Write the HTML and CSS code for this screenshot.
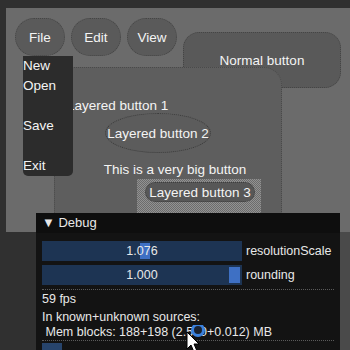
FILE: index.html
```html
<!DOCTYPE html>
<html lang="en">
<head>
  <meta charset="UTF-8">
  <title>Layered buttons</title>
  <link rel="stylesheet" href="styles.css">
</head>
<body>

  <div class="panel">
    <div class="menubar">
      <div class="menu-btn">File</div>
      <div class="menu-btn">Edit</div>
      <div class="menu-btn">View</div>
    </div>

    <div class="normal-btn">Normal button</div>

    <div class="big-btn"></div>
    <div class="layer-label layer-1">Layered button 1</div>
    <div class="layer-2">Layered button 2</div>
    <div class="big-text">This is a very big button</div>
    <div class="hatch">
      <div class="layer-3">Layered button 3</div>
    </div>

    <div class="dropdown">
      <div class="item">New</div>
      <div class="item">Open</div>
      <div class="item"></div>
      <div class="item">Save</div>
      <div class="item"></div>
      <div class="item">Exit</div>
    </div>
  </div>
  <div class="backdrop"></div>

  <div class="debug">
    <div class="debug-head">&#9660; Debug</div>
    <div class="debug-body">
      <div class="slider-row">
        <div class="slider">
          <div class="grab grab-1"></div>
          <span>1.076</span>
        </div>
        <div class="slider-label">resolutionScale</div>
      </div>
      <div class="slider-row">
        <div class="slider">
          <div class="grab grab-2"></div>
          <span>1.000</span>
        </div>
        <div class="slider-label">rounding</div>
      </div>
      <div class="sep"></div>
      <div class="line fps">59 fps</div>
      <div class="line">In known+unknown sources:</div>
      <div class="line">&nbsp;Mem blocks: 188+198 (2.500+0.012) MB</div>
      <div class="sep"></div>
      <div class="next-item"></div>
    </div>
  </div>

  <svg class="cursor" width="30" height="30" viewBox="0 0 30 30">
    <circle cx="12" cy="5" r="5.5" fill="#1a2230" stroke="#3a80dc" stroke-width="3"/>
    <path d="M1 7 L1 24 L5 20 L8 27 L11 26 L8 19 L13 19 Z" fill="#fff" stroke="#000" stroke-width="1"/>
  </svg>

</body>
</html>
```

FILE: styles.css
```css
body {
  margin: 0;
  width: 350px;
  height: 350px;
  overflow: hidden;
  background-color: #303030;
  font-family: "Liberation Sans", Arial, sans-serif;
  font-size: 13.5px;
  color: #f4f4f4;
  white-space: nowrap;
  position: relative;
}

.panel {
  margin: 8px 0 0 6px;
  height: 224px;
  background-color: #6b6b6b;
  position: relative;
  overflow: hidden;
}

.backdrop {
  margin-left: 36px;
  height: 118px;
  background-color: #4a4a4a;
}

/* menu bar */
.menubar {
  display: flex;
  gap: 6px;
  padding: 10px 0 0 9px;
}

.menu-btn {
  width: 50px;
  height: 38px;
  box-sizing: border-box;
  border-radius: 19px;
  border: 1px dotted #454545;
  background-color: #5a5a5a;
  display: flex;
  align-items: center;
  justify-content: center;
}

.dropdown {
  position: absolute;
  left: 17px;
  top: 48px;
  width: 50px;
  background-color: #2c2c2c;
  border-radius: 0 0 5px 5px;
  z-index: 5;
}

.dropdown .item {
  height: 20px;
  line-height: 20px;
}

/* buttons on the canvas */
.normal-btn {
  position: absolute;
  left: 177px;
  top: 24px;
  width: 158px;
  height: 56px;
  box-sizing: border-box;
  border-radius: 16px;
  border: 1px dotted #454545;
  background-color: #595959;
  display: flex;
  align-items: center;
  justify-content: center;
}

.big-btn {
  position: absolute;
  left: 48px;
  top: 59px;
  width: 228px;
  height: 190px;
  box-sizing: border-box;
  border-radius: 18px;
  border: 1px dotted #4a4a4a;
  background-color: #5e5e5e;
}

.layer-label {
  position: absolute;
  line-height: 16px;
}

.layer-1 {
  left: 61px;
  top: 90px;
}

.layer-2 {
  position: absolute;
  left: 99px;
  top: 105px;
  width: 106px;
  height: 40px;
  box-sizing: border-box;
  border-radius: 50%;
  border: 1px dotted #3c3c3c;
  background-color: #5c5c5c;
  display: flex;
  align-items: center;
  justify-content: center;
}

.big-text {
  position: absolute;
  left: 84px;
  top: 154px;
  width: 170px;
  text-align: center;
  line-height: 16px;
}

.hatch {
  position: absolute;
  left: 131px;
  top: 171px;
  width: 124px;
  height: 60px;
  background: repeating-conic-gradient(#929292 0 25%, #6c6c6c 0 50%) 0 0 / 2px 2px;
}

.layer-3 {
  margin: 3px 0 0 8px;
  width: 110px;
  height: 20px;
  box-sizing: border-box;
  border-radius: 10px;
  border: 1px dotted #3e3e3e;
  background-color: #575757;
  display: flex;
  align-items: center;
  justify-content: center;
}

/* debug window */
.debug {
  position: absolute;
  left: 36px;
  top: 213px;
  width: 304px;
  height: 150px;
  background-color: #131313;
  color: #e8e8e8;
  font-size: 12.5px;
  z-index: 10;
}

.debug-head {
  height: 20px;
  line-height: 20px;
  padding-left: 6px;
  font-size: 13px;
  background-color: #0e0e0e;
}

.debug-body {
  padding: 8px 6px 0 6px;
}

.slider-row {
  display: flex;
  align-items: center;
  gap: 4px;
  margin-bottom: 4px;
}

.slider {
  width: 200px;
  height: 20px;
  background-color: #1d3453;
  position: relative;
  display: flex;
  align-items: center;
  justify-content: center;
}

.slider span {
  position: relative;
}

.grab {
  position: absolute;
  top: 2px;
  height: 16px;
  background-color: #3e70c4;
}

.grab-1 {
  left: 98px;
  width: 10px;
}

.grab-2 {
  left: 187px;
  width: 11px;
}

.sep {
  border-top: 1px dotted #5a5a5a;
  margin: 0 0 2px 0;
}

.line {
  line-height: 15px;
}

.fps {
  margin-bottom: 3px;
}

.next-item {
  width: 20px;
  height: 10px;
  margin-top: 2px;
  background-color: #27446c;
}

.cursor {
  position: absolute;
  left: 186px;
  top: 325px;
  z-index: 20;
}
```
